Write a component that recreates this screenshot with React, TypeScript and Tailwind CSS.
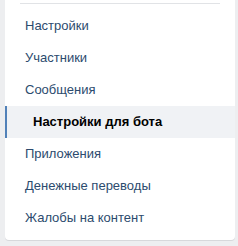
const items = [
  { label: 'Настройки' },
  { label: 'Участники' },
  { label: 'Сообщения' },
  { label: 'Настройки для бота', active: true },
  { label: 'Приложения' },
  { label: 'Денежные переводы' },
  { label: 'Жалобы на контент' },
];

export default function App() {
  return (
    <div className="w-[238px] h-[246px] bg-[#edeef0] pl-[5px] pr-[3px] overflow-hidden font-['Liberation_Sans',Arial,sans-serif]">
      <div className="bg-white rounded-b-[4px] shadow-[0_1px_0_0_#d7d8db] pt-[3px] pb-[6px]">
        {/* top divider */}
        <div className="mx-[15px] h-px bg-[#e1e3e6]" />
        <div className="pt-[6px] flex flex-col">
          {items.map((item) =>
            item.active ? (
              <div
                key={item.label}
                className="h-[32px] flex items-center bg-[#f0f2f5] border-l-2 border-[#5181b8] pl-[26px] text-[13px] font-bold text-black"
              >
                {item.label}
              </div>
            ) : (
              <div
                key={item.label}
                className="h-[32px] flex items-center pl-[20px] text-[13px] text-[#2c4b6e]"
              >
                {item.label}
              </div>
            )
          )}
        </div>
      </div>
    </div>
  );
}
